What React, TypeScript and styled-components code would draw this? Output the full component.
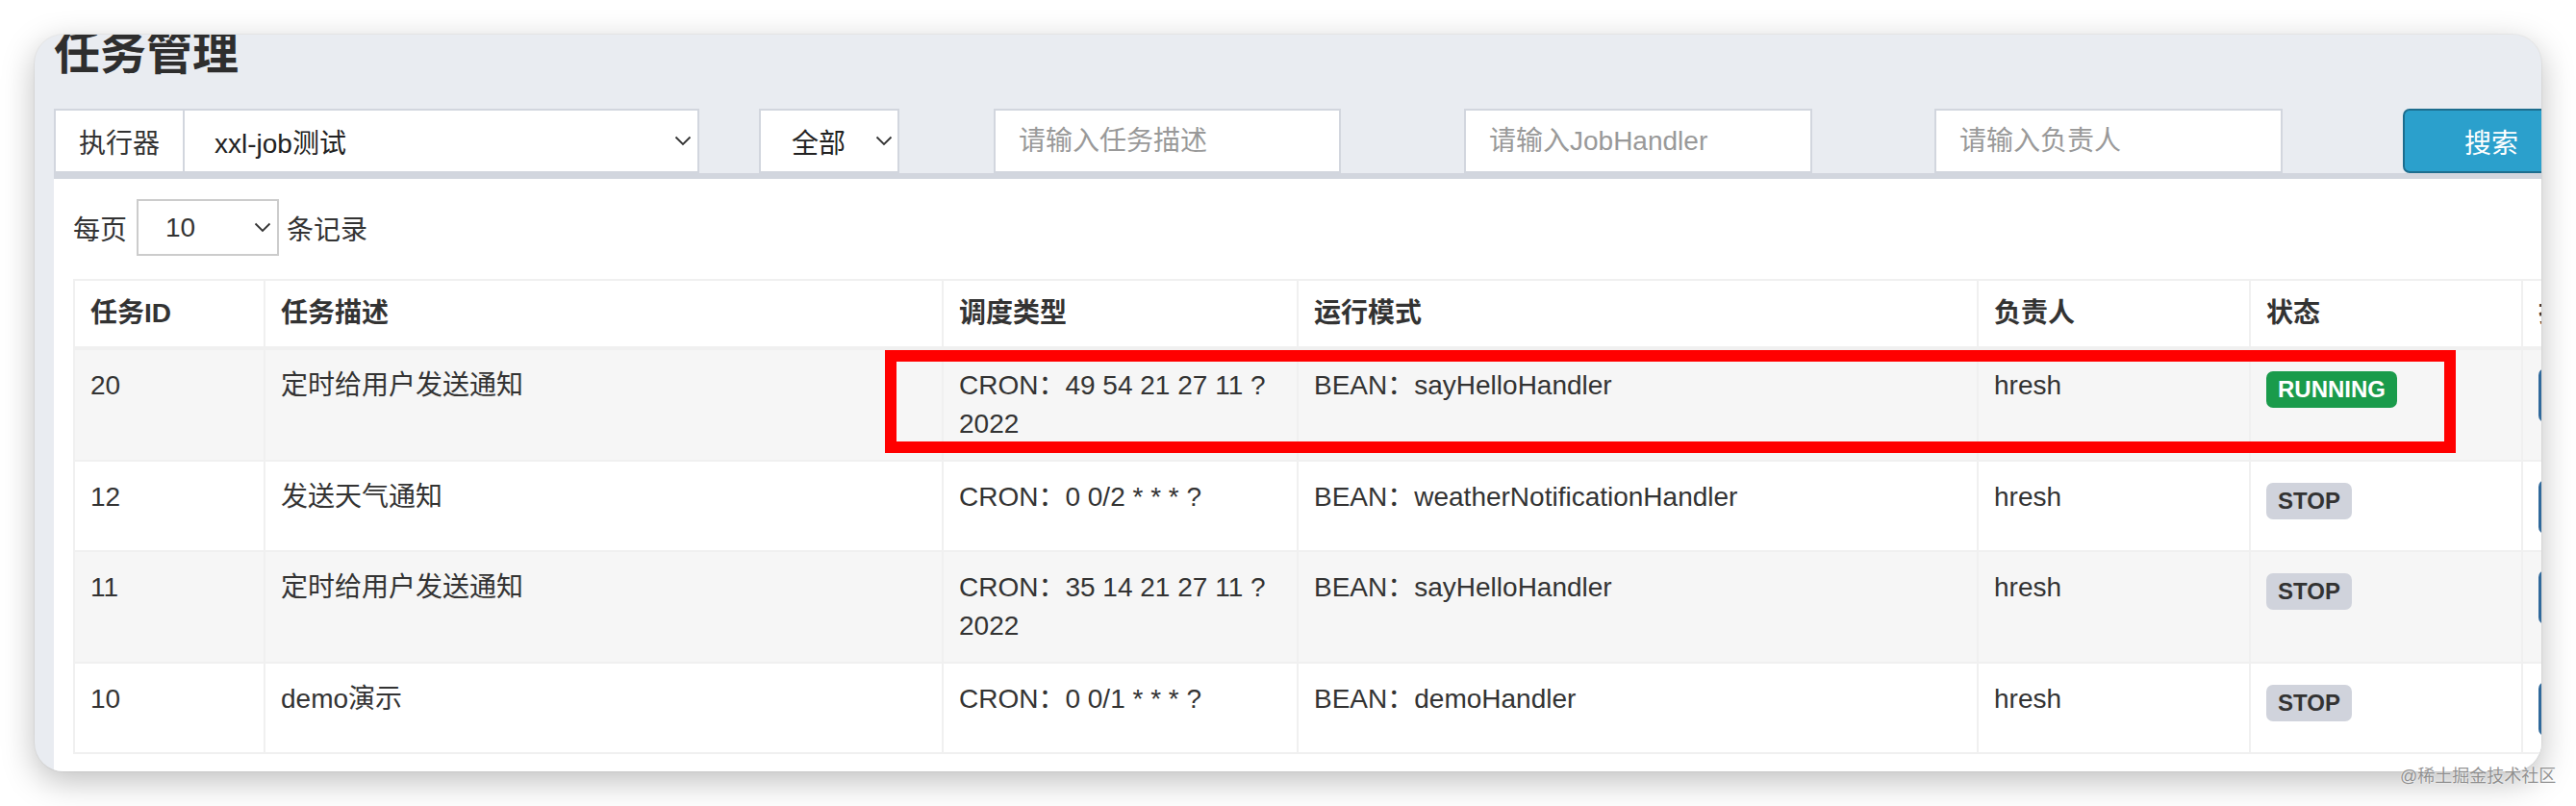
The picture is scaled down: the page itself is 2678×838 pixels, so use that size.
import React from 'react';
import styled, { createGlobalStyle } from 'styled-components';

type Job = {
  id: number;
  desc: string;
  cron: string;
  mode: string;
  owner: string;
  running: boolean;
};

const jobs: Job[] = [
  { id: 20, desc: '定时给用户发送通知', cron: 'CRON：49 54 21 27 11 ? 2022', mode: 'BEAN：sayHelloHandler', owner: 'hresh', running: true },
  { id: 12, desc: '发送天气通知', cron: 'CRON：0 0/2 * * * ?', mode: 'BEAN：weatherNotificationHandler', owner: 'hresh', running: false },
  { id: 11, desc: '定时给用户发送通知', cron: 'CRON：35 14 21 27 11 ? 2022', mode: 'BEAN：sayHelloHandler', owner: 'hresh', running: false },
  { id: 10, desc: 'demo演示', cron: 'CRON：0 0/1 * * * ?', mode: 'BEAN：demoHandler', owner: 'hresh', running: false },
];

const columns = [
  { title: '任务ID', width: 198 },
  { title: '任务描述', width: 705 },
  { title: '调度类型', width: 369 },
  { title: '运行模式', width: 707 },
  { title: '负责人', width: 283 },
  { title: '状态', width: 283 },
  { title: '操作', width: 300 },
];

const tableWidth = columns.reduce((sum, c) => sum + c.width, 0);

const Chevron = () => (
  <svg width="18" height="11" viewBox="0 0 18 11">
    <polyline points="1.5,1.5 9,9 16.5,1.5" fill="none" stroke="#333" strokeWidth="1.8" />
  </svg>
);

const App = () => {
  return (
    <>
      <GlobalStyle />
      <Page>
        <Window>
          <Title>任务管理</Title>
          <Toolbar>
            <Field $w={671}>
              <Addon>执行器</Addon>
              <SelectBox $pl={31} $pr={6}>
                <span>xxl-job测试</span>
                <Chevron />
              </SelectBox>
            </Field>
            <Field $w={146} $ml={62}>
              <SelectBox $pl={32} $pr={5}>
                <span>全部</span>
                <Chevron />
              </SelectBox>
            </Field>
            <Field $w={361} $ml={98}>
              <TextInput placeholder="请输入任务描述" />
            </Field>
            <Field $w={362} $ml={128}>
              <TextInput placeholder="请输入JobHandler" />
            </Field>
            <Field $w={362} $ml={127}>
              <TextInput placeholder="请输入负责人" />
            </Field>
            <Field $w={184} $ml={125}>
              <SearchButton>搜索</SearchButton>
            </Field>
          </Toolbar>

          <Box>
            <LengthRow>
              <span>每页</span>
              <LengthSelect>
                <span>10</span>
                <Chevron />
              </LengthSelect>
              <span>条记录</span>
            </LengthRow>

            <TableWrap>
              <Table style={{ width: tableWidth }}>
                <colgroup>
                  {columns.map((c) => (
                    <col key={c.title} style={{ width: c.width }} />
                  ))}
                </colgroup>
                <thead>
                  <tr>
                    {columns.map((c) => (
                      <Th key={c.title}>{c.title}</Th>
                    ))}
                  </tr>
                </thead>
                <tbody>
                  {jobs.map((job, i) => (
                    <Row key={job.id} $striped={i % 2 === 0}>
                      <Td>{job.id}</Td>
                      <Td>{job.desc}</Td>
                      <Td>{job.cron}</Td>
                      <Td>{job.mode}</Td>
                      <Td>{job.owner}</Td>
                      <Td>
                        <Badge $running={job.running}>{job.running ? 'RUNNING' : 'STOP'}</Badge>
                      </Td>
                      <Td>
                        <OpButton>操作 ▾</OpButton>
                      </Td>
                    </Row>
                  ))}
                </tbody>
              </Table>
              <Highlight />
            </TableWrap>
          </Box>
        </Window>
        <Watermark>@稀土掘金技术社区</Watermark>
      </Page>
    </>
  );
};

const GlobalStyle = createGlobalStyle`
  * { box-sizing: border-box; }
  html, body {
    margin: 0;
    padding: 0;
    background: #fff;
    overflow: hidden;
  }
  body {
    font-family: "Liberation Sans", "Noto Sans CJK SC", sans-serif;
    color: #333;
  }
`;

const Page = styled.div`
  position: relative;
  width: 2678px;
  height: 838px;
  padding: 36px;
`;

const Window = styled.div`
  display: flex;
  flex-direction: column;
  width: 2606px;
  height: 766px;
  padding-left: 20px;
  border-radius: 30px;
  overflow: hidden;
  background: #e9ecf1;
  box-shadow: 0 10px 34px rgba(0, 0, 0, 0.26), 0 0 0 1px rgba(0, 0, 0, 0.04);
`;

const Title = styled.h1`
  flex: none;
  margin: -6px 0 0;
  font-size: 48px;
  line-height: 52px;
  font-weight: 700;
  color: #2e2e2e;
`;

const Toolbar = styled.div`
  display: flex;
  flex: none;
  height: 67px;
  margin-top: 31px;
`;

const Field = styled.div<{ $w: number; $ml?: number }>`
  display: flex;
  flex: none;
  width: ${(p) => p.$w}px;
  margin-left: ${(p) => p.$ml ?? 0}px;
`;

const Addon = styled.div`
  display: flex;
  align-items: center;
  width: 134px;
  padding-left: 24px;
  border: 2px solid #d2d6de;
  border-right: none;
  background: #fff;
  font-size: 28px;
  color: #333;
`;

const SelectBox = styled.div<{ $pl: number; $pr: number }>`
  display: flex;
  flex: 1;
  align-items: center;
  justify-content: space-between;
  padding: 0 ${(p) => p.$pr}px 0 ${(p) => p.$pl}px;
  border: 2px solid #d2d6de;
  background: #fff;
  font-size: 28px;
  color: #222;
`;

const TextInput = styled.input`
  flex: 1;
  min-width: 0;
  height: 100%;
  padding: 0 24px;
  border: 2px solid #d2d6de;
  background: #fff;
  font-family: inherit;
  font-size: 28px;
  color: #333;
  outline: none;

  &::placeholder {
    color: #999;
  }
`;

const SearchButton = styled.button`
  flex: 1;
  height: 100%;
  border: 2px solid #1d6d8e;
  border-radius: 7px;
  background: #2ba0cc;
  font-family: inherit;
  font-size: 28px;
  color: #fff;
`;

const Box = styled.div`
  flex: none;
  width: 2800px;
  padding: 21px 20px 20px;
  border-top: 6px solid #d2d6de;
  background: #fff;
`;

const LengthRow = styled.div`
  display: flex;
  align-items: center;
  height: 59px;
  font-size: 28px;
  color: #333;
`;

const LengthSelect = styled.div`
  display: flex;
  align-items: center;
  justify-content: space-between;
  width: 148px;
  height: 59px;
  margin: 0 8px 0 10px;
  padding: 0 6px 0 28px;
  border: 2px solid #ccc;
  background: #fff;
`;

const TableWrap = styled.div`
  position: relative;
  margin-top: 24px;
`;

const Table = styled.table`
  table-layout: fixed;
  border-collapse: collapse;
  font-size: 28px;
  color: #333;
`;

const Th = styled.th`
  padding: 14px 16px;
  line-height: 40px;
  text-align: left;
  font-weight: 700;
  border: 2px solid #f0f0f0;
  border-bottom-width: 4px;
  white-space: nowrap;
`;

const Row = styled.tr<{ $striped: boolean }>`
  background: ${(p) => (p.$striped ? '#f6f6f6' : '#fff')};
`;

const Td = styled.td`
  padding: 17px 16px;
  line-height: 40px;
  vertical-align: top;
  border: 2px solid #f0f0f0;
`;

const Badge = styled.span<{ $running: boolean }>`
  display: inline-block;
  vertical-align: top;
  margin-top: 5px;
  height: 38px;
  padding: 0 12px;
  border-radius: 7px;
  line-height: 38px;
  font-size: 24px;
  font-weight: 700;
  background: ${(p) => (p.$running ? '#1a9b4b' : '#d0d3dc')};
  color: ${(p) => (p.$running ? '#fff' : '#333')};
`;

const OpButton = styled.div`
  display: flex;
  align-items: center;
  width: 130px;
  height: 56px;
  margin-top: 2px;
  padding: 0 18px;
  border-radius: 7px;
  background: #30699b;
  font-size: 24px;
  color: #fff;
`;

const Highlight = styled.div`
  position: absolute;
  left: 844px;
  top: 74px;
  width: 1633px;
  height: 107px;
  border: 12px solid #ff0000;
  pointer-events: none;
`;

const Watermark = styled.div`
  position: absolute;
  left: 2495px;
  top: 792px;
  font-size: 18px;
  color: rgba(110, 110, 110, 0.75);
  text-shadow: 0 0 2px #fff;
  white-space: nowrap;
`;

export default App;
